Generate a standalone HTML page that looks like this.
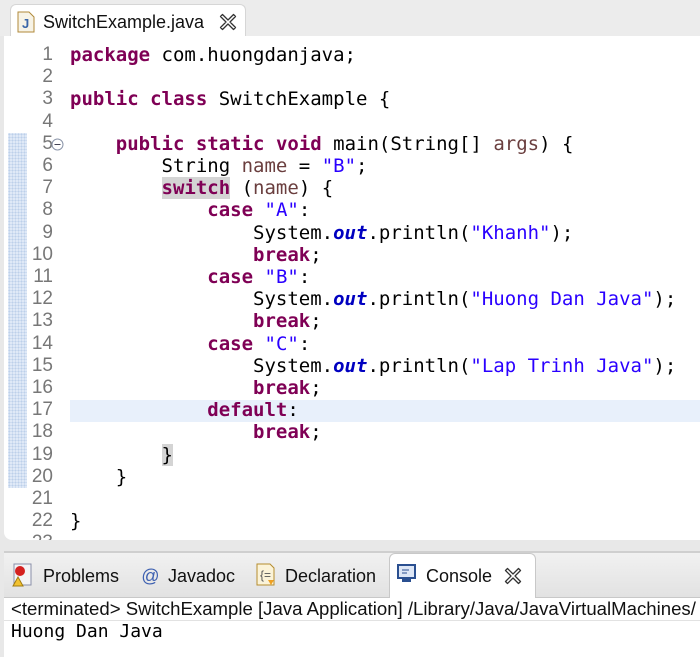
<!DOCTYPE html>
<html><head><style>
body{margin:0;width:700px;height:657px;background:#e8e8e8;overflow:hidden;position:relative;font-family:"Liberation Sans",sans-serif}
.top{position:absolute;left:0;top:0;width:700px;height:36px;background:#ececec}
.tab{position:absolute;left:10px;top:4px;width:234px;height:33px;background:#fff;border:1px solid #d6d6d6;border-bottom:none;border-radius:6px 6px 0 0;font-size:18px;color:#111}
.editor{position:absolute;left:4px;top:36px;width:700px;height:504px;background:#fff;border-radius:0 0 0 8px;overflow:hidden}
.gut{position:absolute;left:8px;top:133px;width:19px;height:355px;background-color:#dfe9f7;background-image:radial-gradient(#bcd0ea 0.8px,transparent 0.9px);background-size:3px 3px}
.nums{position:absolute;left:14px;top:8px;width:35px;text-align:right;font-size:19px;line-height:22.2px;color:#777}
.code{position:absolute;left:70px;top:44px;font-family:"DejaVu Sans Mono",monospace;font-size:19px;line-height:22.2px;color:#000;white-space:pre}
.k{color:#7f0055;font-weight:bold}.s{color:#2a00ff}.f{color:#0000c0;font-weight:bold;font-style:italic}.v{color:#6a3e3e}
.hl{position:absolute;left:70px;top:400px;width:630px;height:22px;background:#e8f0fb}
.panel{position:absolute;left:4px;top:551px;width:700px;height:106px;background:#fff}
.ptabs{position:absolute;left:0;top:0;width:700px;height:44px;background:linear-gradient(#f1f1f1,#e2e2e2);border-top:2px solid #cfcfcf;border-bottom:1px solid #c8c8c8;font-size:18px;color:#111}
.ptabs span{position:absolute;top:13px}
.ctab{position:absolute;left:385px;top:0;width:145px;height:44px;background:#fff;border:1px solid #c8c8c8;border-bottom:none;border-radius:6px 6px 0 0}
.info{position:absolute;left:7px;top:47px;font-size:18.6px;color:#111;white-space:nowrap}
.out{position:absolute;left:7px;top:70px;font-family:"DejaVu Sans Mono",monospace;font-size:18px;color:#000}
.line{position:absolute;left:0;top:69px;width:700px;height:1px;background:#e2e2e2}
</style></head><body>
<div class="top"></div>
<div class="tab">
<svg style="position:absolute;left:6px;top:6px" width="18" height="22"><path d="M1 1h11l5 5v15H1z" fill="#f7f3e6" stroke="#b08a3a"/><text x="5" y="17" font-family="Liberation Sans" font-weight="bold" font-size="13" fill="#3a66a8">J</text></svg>
<span style="position:absolute;left:32px;top:7px">SwitchExample.java</span>
<svg style="position:absolute;left:208px;top:8px" width="18" height="18"><path d="M3.5 1.5L9 7L14.5 1.5L16.5 3.5L11 9L16.5 14.5L14.5 16.5L9 11L3.5 16.5L1.5 14.5L7 9L1.5 3.5Z" stroke="#333" stroke-width="1.3" fill="#fff" stroke-linejoin="round"/></svg>
</div>
<div class="editor"><div class="nums">1<br>2<br>3<br>4<br>5<br>6<br>7<br>8<br>9<br>10<br>11<br>12<br>13<br>14<br>15<br>16<br>17<br>18<br>19<br>20<br>21<br>22<br>23</div></div>
<div class="gut"></div>
<div class="hl"></div>
<svg style="position:absolute;left:51px;top:138px" width="13" height="13"><circle cx="6.5" cy="6.5" r="5.5" fill="#fff" stroke="#8a94a8"/><path d="M3.5 6.5h6" stroke="#445"/></svg>
<div class="code"><span class="k">package</span> com.huongdanjava;

<span class="k">public</span> <span class="k">class</span> SwitchExample {

    <span class="k">public</span> <span class="k">static</span> <span class="k">void</span> main(String[] <span class="v">args</span>) {
        String <span class="v">name</span> = <span class="s">"B"</span>;
        <span class="k" style="background:#d4d4d4">switch</span> (<span class="v">name</span>) {
            <span class="k">case</span> <span class="s">"A"</span>:
                System.<span class="f">out</span>.println(<span class="s">"Khanh"</span>);
                <span class="k">break</span>;
            <span class="k">case</span> <span class="s">"B"</span>:
                System.<span class="f">out</span>.println(<span class="s">"Huong Dan Java"</span>);
                <span class="k">break</span>;
            <span class="k">case</span> <span class="s">"C"</span>:
                System.<span class="f">out</span>.println(<span class="s">"Lap Trinh Java"</span>);
                <span class="k">break</span>;
            <span class="k">default</span>:
                <span class="k">break</span>;
        <span style="background:#d4d4d4">}</span>
    }

}</div>
<div class="panel">
<div class="ptabs">
<div class="ctab"></div>
<svg style="position:absolute;left:7px;top:9px" width="24" height="26"><rect x="3" y="2" width="17" height="21" fill="#f3f3f6" stroke="#8a8fa8"/><circle cx="9" cy="9" r="5" fill="#d42020"/><path d="M2 24l5-9 5 9z" fill="#f2c230" stroke="#a07a10"/></svg>
<span style="left:39px">Problems</span>
<span style="left:137px;color:#3c5fb0;font-style:italic">@</span>
<span style="left:164px">Javadoc</span>
<svg style="position:absolute;left:250px;top:9px" width="24" height="26"><path d="M3 2h13l4 4v17H3z" fill="#fbf3d8" stroke="#b58c2e"/><text x="6" y="17" font-size="12" fill="#555">{=</text><path d="M14 18h6l-3 5z" fill="#f0a020"/></svg>
<span style="left:281px">Declaration</span>
<svg style="position:absolute;left:393px;top:11px" width="20" height="20"><rect x="1" y="1" width="17" height="13" fill="#dde6f5" stroke="#2a4f90" stroke-width="2"/><path d="M5 6h7M5 9h5" stroke="#2a4f90"/><rect x="5" y="15" width="9" height="3" fill="#2a4f90"/></svg>
<span style="left:422px">Console</span>
<svg style="position:absolute;left:500px;top:14px" width="18" height="18"><path d="M3.5 1.5L9 7L14.5 1.5L16.5 3.5L11 9L16.5 14.5L14.5 16.5L9 11L3.5 16.5L1.5 14.5L7 9L1.5 3.5Z" stroke="#333" stroke-width="1.3" fill="#fff" stroke-linejoin="round"/></svg>
</div>
<div class="info">&lt;terminated&gt; SwitchExample [Java Application] /Library/Java/JavaVirtualMachines/</div>
<div class="line"></div>
<div class="out">Huong Dan Java</div>
</div>
</body></html>
